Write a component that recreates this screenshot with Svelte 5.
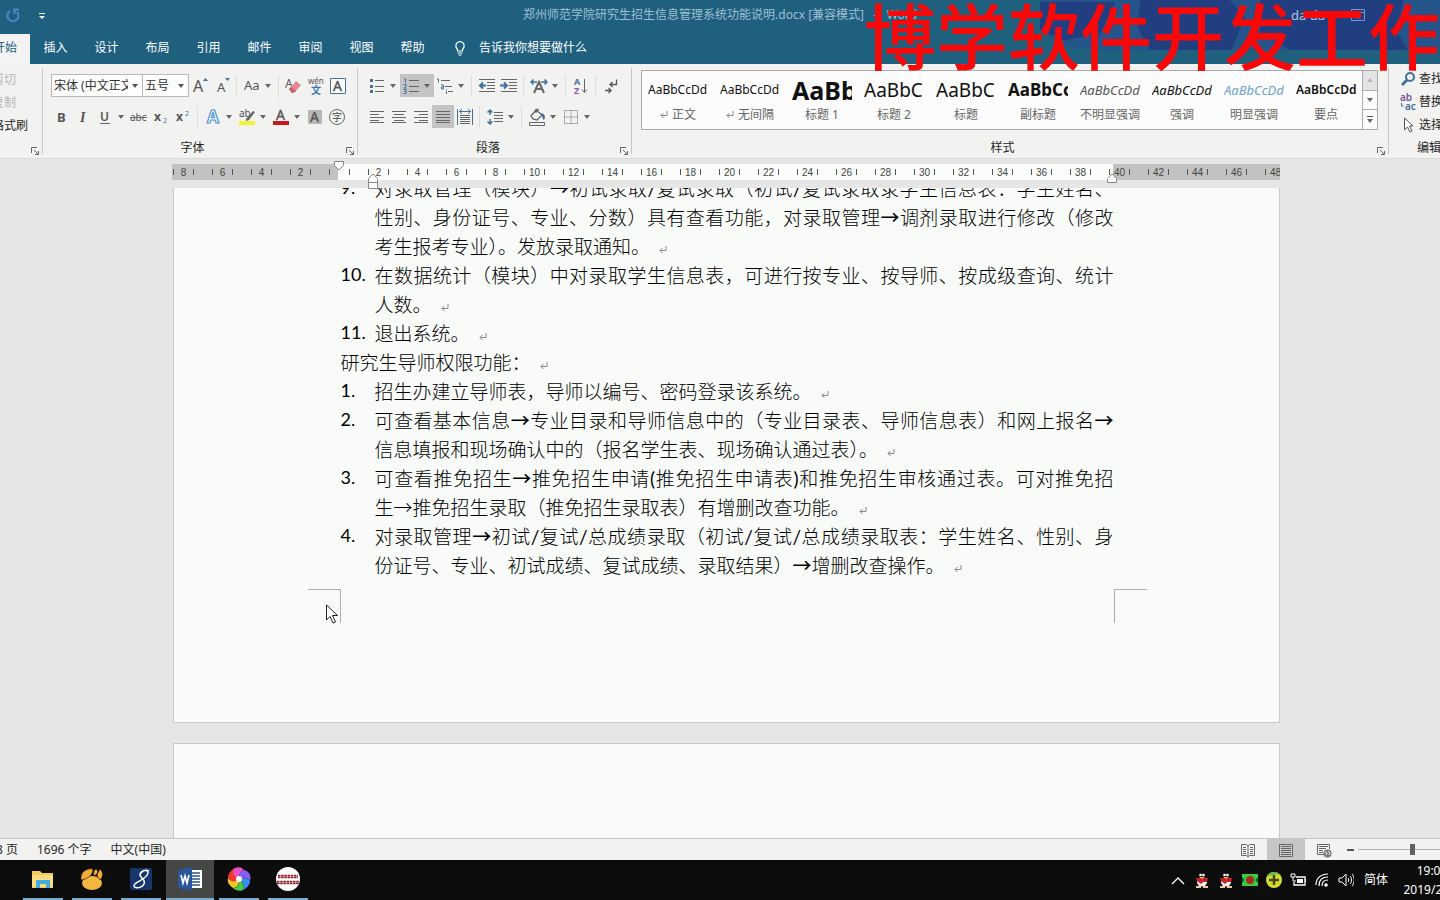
<script lang="ts">
  interface Tool {
    icon: string;
    label: string;
    menu?: boolean;
    active?: boolean;
    divider?: boolean;
  }

  interface Line {
    text: string;
    full?: boolean;
    plain?: boolean;
  }

  interface Paragraph {
    num?: string;
    lines: Line[];
  }

  const tabs = ['插入', '设计', '布局', '引用', '邮件', '审阅', '视图', '帮助'];

  const fontTop: Tool[] = [
    { icon: 'grow', label: '增大字号' },
    { icon: 'shrink', label: '减小字号' },
    { icon: 'case', label: '更改大小写', menu: true, divider: true },
    { icon: 'eraser', label: '清除所有格式', divider: true },
    { icon: 'pinyin', label: '拼音指南' },
    { icon: 'charBorder', label: '字符边框' },
  ];

  const fontBottom: Tool[] = [
    { icon: 'bold', label: '加粗' },
    { icon: 'italic', label: '倾斜' },
    { icon: 'underline', label: '下划线', menu: true },
    { icon: 'strike', label: '删除线' },
    { icon: 'sub', label: '下标' },
    { icon: 'sup', label: '上标' },
    { icon: 'effect', label: '文本效果', menu: true, divider: true },
    { icon: 'highlight', label: '突出显示', menu: true },
    { icon: 'color', label: '字体颜色', menu: true },
    { icon: 'shade', label: '字符底纹' },
    { icon: 'circled', label: '带圈字符' },
  ];

  const paraTop: Tool[] = [
    { icon: 'bullets', label: '项目符号', menu: true },
    { icon: 'numbers', label: '编号', menu: true, active: true },
    { icon: 'levels', label: '多级列表', menu: true },
    { icon: 'outdent', label: '减少缩进量', divider: true },
    { icon: 'indent', label: '增加缩进量' },
    { icon: 'asian', label: '中文版式', menu: true, divider: true },
    { icon: 'sort', label: '排序', divider: true },
    { icon: 'marks', label: '显示编辑标记', divider: true },
  ];

  const paraBottom: Tool[] = [
    { icon: 'left', label: '左对齐' },
    { icon: 'center', label: '居中' },
    { icon: 'right', label: '右对齐' },
    { icon: 'justify', label: '两端对齐', active: true },
    { icon: 'distribute', label: '分散对齐' },
    { icon: 'spacing', label: '行和段落间距', menu: true, divider: true },
    { icon: 'fill', label: '底纹', menu: true, divider: true },
    { icon: 'borders', label: '边框', menu: true },
  ];

  const styles = [
    { sample: 'AaBbCcDd', name: '正文', kind: 'plain', mark: true },
    { sample: 'AaBbCcDd', name: '无间隔', kind: 'plain', mark: true },
    { sample: 'AaBb', name: '标题 1', kind: 'h1' },
    { sample: 'AaBbC', name: '标题 2', kind: 'h2' },
    { sample: 'AaBbC', name: '标题', kind: 'h2' },
    { sample: 'AaBbCc', name: '副标题', kind: 'subtitle' },
    { sample: 'AaBbCcDd', name: '不明显强调', kind: 'subtle' },
    { sample: 'AaBbCcDd', name: '强调', kind: 'emphasis' },
    { sample: 'AaBbCcDd', name: '明显强调', kind: 'intense' },
    { sample: 'AaBbCcDd', name: '要点', kind: 'strong' },
  ];

  const rulerMarks = Array.from({ length: 29 }, (_, i) => Math.abs(i * 2 - 8));

  const paragraphs: Paragraph[] = [
    {
      num: '9.',
      lines: [
        { text: '对录取管理（模块）→初试录取/复试录取（初试/复试录取录学生信息表：学生姓名、', full: true },
        { text: '性别、身份证号、专业、分数）具有查看功能，对录取管理→调剂录取进行修改（修改', full: true },
        { text: '考生报考专业）。发放录取通知。' },
      ],
    },
    {
      num: '10.',
      lines: [
        { text: '在数据统计（模块）中对录取学生信息表，可进行按专业、按导师、按成级查询、统计', full: true },
        { text: '人数。' },
      ],
    },
    { num: '11.', lines: [{ text: '退出系统。' }] },
    { lines: [{ text: '研究生导师权限功能：' }] },
    { num: '1.', lines: [{ text: '招生办建立导师表，导师以编号、密码登录该系统。' }] },
    {
      num: '2.',
      lines: [
        { text: '可查看基本信息→专业目录和导师信息中的（专业目录表、导师信息表）和网上报名→', full: true },
        { text: '信息填报和现场确认中的（报名学生表、现场确认通过表）。' },
      ],
    },
    {
      num: '3.',
      lines: [
        { text: '可查看推免招生→推免招生申请(推免招生申请表)和推免招生审核通过表。可对推免招', full: true },
        { text: '生→推免招生录取（推免招生录取表）有增删改查功能。', plain: true },
      ],
    },
    {
      num: '4.',
      lines: [
        { text: '对录取管理→初试/复试/总成绩录取（初试/复试/总成绩录取表：学生姓名、性别、身', full: true },
        { text: '份证号、专业、初试成绩、复试成绩、录取结果）→增删改查操作。' },
      ],
    },
  ];

  const apps = [
    { icon: 'folder', label: '文件资源管理器' },
    { icon: 'paw', label: '浏览器' },
    { icon: 'eight', label: '数据库' },
    { icon: 'word', label: 'Word', active: true },
    { icon: 'pinwheel', label: '图片' },
    { icon: 'badge', label: '录屏' },
  ];

  const tray = [
    { icon: 'chevron', label: '显示隐藏的图标' },
    { icon: 'penguin', label: 'QQ' },
    { icon: 'penguin', label: 'QQ' },
    { icon: 'gpu', label: '显卡' },
    { icon: 'plus', label: '安全卫士' },
    { icon: 'battery', label: '电源' },
    { icon: 'wifi', label: '网络' },
    { icon: 'volume', label: '音量' },
  ];

  const g = 'stroke="#666" fill="none"';
  const b = 'stroke="#41719c" fill="none"';
  const t = 'font-family="Noto Sans, sans-serif" fill="#555"';

  // All glyphs are drawn on an 18x18 grid.
  const icons: Record<string, string> = {
    grow: `<text x="2" y="15" font-size="16" ${t}>A</text><path d="M12 4l2.500-3 2.500 3z" fill="#41719c"/>`,
    shrink: `<text x="4" y="15" font-size="13" ${t}>A</text><path d="M12 1l2.500 3 2.500-3z" fill="#41719c"/>`,
    case: `<text x="1" y="13" font-size="13" ${t}>Aa</text>`,
    eraser: `<text x="0" y="11" font-size="12" ${t}>A</text><path d="M4 12l7-8 5 4-6 7-3 1z" fill="#e58792"/><path d="M4 12l2-2 5 4-1 1-3 1z" fill="#c9606f"/>`,
    pinyin: `<text x="1" y="7" font-size="8" ${t}>wén</text><text x="4" y="17" font-size="10" font-weight="700" font-family="Noto Sans CJK SC, sans-serif" fill="#3a78b5">文</text>`,
    charBorder: `<path d="M1.500 1.500h15v15h-15z" stroke="#41719c" fill="#fff"/><text x="4" y="14" font-size="14" ${t} stroke="#555" stroke-width=".4">A</text>`,
    bold: `<text x="5" y="14" font-size="13" font-weight="700" ${t}>B</text>`,
    italic: `<text x="6" y="14" font-size="14" font-style="italic" font-weight="700" font-family="Liberation Serif, serif" fill="#555">I</text>`,
    underline: `<text x="4" y="13" font-size="12" font-weight="600" ${t}>U</text><path d="M4 15.500h10" ${g}/>`,
    strike: `<text x="0" y="13" font-size="10" ${t}>abc</text><path d="M0 9.500h17" ${g}/>`,
    sub: `<text x="2" y="13" font-size="12" font-weight="700" ${t}>x</text><text x="11" y="15" font-size="7" font-family="Noto Sans" fill="#3a78b5">2</text>`,
    sup: `<text x="2" y="13" font-size="12" font-weight="700" ${t}>x</text><text x="11" y="8" font-size="7" font-family="Noto Sans" fill="#3a78b5">2</text>`,
    effect: `<text x="3" y="15" font-size="17" font-weight="700" font-family="Noto Sans" fill="#fff" stroke="#4f94cf" stroke-width="1.200">A</text>`,
    highlight: `<path d="M1 13h16v4H1z" fill="#f4f42c"/><text x="1" y="9" font-size="10" ${t}>ab</text><path d="M8 11l7-8 2 1-6 8-3 1z" fill="#666"/>`,
    color: `<path d="M1 13h16v4H1z" fill="#c41a1f"/><text x="4" y="12" font-size="14" ${t} stroke="#555" stroke-width=".4">A</text>`,
    shade: `<path d="M2 2h14v14H2z" fill="#b8b8b8"/><text x="4" y="14" font-size="14" ${t} stroke="#555" stroke-width=".4">A</text>`,
    circled: `<circle cx="9" cy="9" r="7.500" ${g}/><text x="4" y="13" font-size="10" font-family="Noto Sans CJK SC, sans-serif" fill="#444">字</text>`,
    bullets: `<path d="M2 2h3v3H2zM2 8h3v3H2zM2 13h3v3H2z" fill="#41719c"/><path d="M7 3.500h9M7 9.500h9M7 14.500h9" ${g}/>`,
    numbers: `<path d="M7 3.500h10M7 9.500h10M7 14.500h10" ${g}/><path d="M2 2h1.500v3.500M1.500 7.500h2.500v1.500l-2 2h2.500M1.500 12.500h2.500v4H1.500M2.500 14.500H4" ${b}/>`,
    levels: `<path d="M5 3.500h9M9 9.500h7M12 14.500h5" ${g}/><path d="M1 2h1.500v3.500M5 8h2.500v4H5.500v-2h2M10.500 12v1M10.500 14v3" ${b}/>`,
    outdent: `<path d="M1 2.500h16M9 5.500h8M9 8.500h8M9 11.500h8M1 14.500h16" ${g}/><path d="M8 8.500H2M5 5.500l-3 3 3 3" ${b} stroke-width="2"/>`,
    indent: `<path d="M1 2.500h16M9 5.500h8M9 8.500h8M9 11.500h8M1 14.500h16" ${g}/><path d="M0 8.500h6M4 5.500l3 3-3 3" ${b} stroke-width="2"/>`,
    asian: `<path d="M4 16l5-11 5 11M6 12h6" ${g} stroke-width="2"/><path d="M7 5H1M3.500 2.500L1 5l2.500 2.500M11 5h6M14.500 2.500L17 5l-2.500 2.500" ${b} stroke-width="1.500"/>`,
    sort: `<text x="2" y="8" font-size="9" font-weight="700" font-family="Noto Sans" fill="#41719c">A</text><text x="2" y="17" font-size="9" font-weight="700" font-family="Noto Sans" fill="#8a5aa8">Z</text><path d="M12.500 2v13M10 12.500l2.500 3 2.500-3" ${g}/>`,
    marks: `<path d="M14.500 2.500v5H8.500M10.500 5L8 7.500 10.500 10M3 13.500h6M6.500 11L9 13.500 6.500 16" stroke="#555" stroke-width="1.300" fill="none"/>`,
    left: `<path d="M2 3.500h14M2 6.500h9M2 9.500h14M2 12.500h9M2 14.500h14" ${g}/>`,
    center: `<path d="M2 3.500h14M4 6.500h10M2 9.500h14M4 12.500h10M2 14.500h14" ${g}/>`,
    right: `<path d="M2 3.500h14M7 6.500h9M2 9.500h14M7 12.500h9M2 14.500h14" ${g}/>`,
    justify: `<path d="M2 3.500h14M2 6.500h14M2 9.500h14M2 12.500h14M2 14.500h14" ${g}/>`,
    distribute: `<path d="M4 7.500h10M4 9.500h10M4 11.500h10M4 13.500h10M4 15.500h10" ${g}/><path d="M1.500 1v16M16.500 1v16M3 3.500h12M6 1L3.500 3.500 6 6M12 1l2.500 2.500L12 6" ${b}/>`,
    spacing: `<path d="M8 4.500h9M8 7.500h9M8 10.500h9M8 13.500h9" ${g}/><path d="M4 2v5M1.500 4.500L4 2l2.500 2.500M4 11v5M1.500 13.500L4 16l2.500-2.500" ${b} stroke-width="1.500"/>`,
    fill: `<path d="M3 8l5-6 6 5-5 5-4-1zM8 5V1.500h2V4" ${g} stroke-width="1.300"/><path d="M12 5c5 0 6 4 4 7-2-1-1-4-4-7" fill="#41719c"/><path d="M1.500 14.500h15v3h-15z" ${g}/>`,
    borders: `<path d="M2.500 2.500h13v13h-13zM9 2.500v13M2.500 9h13" ${g} stroke-dasharray="1 1"/>`,
    find: `<circle cx="11" cy="7" r="4" stroke="#41719c" stroke-width="2" fill="none"/><path d="M8 10l-5 5" stroke="#41719c" stroke-width="3"/>`,
    replace: `<text x="1" y="8" font-size="10" font-weight="600" font-family="Noto Sans" fill="#76559b">ab</text><text x="6" y="17" font-size="10" font-weight="600" font-family="Noto Sans" fill="#456f94">ac</text><path d="M2.500 10v3h2" ${b}/>`,
    select: `<path d="M5.500 2v12l3-3 2.500 5 2-1-2.500-5h3.500z" stroke="#555" fill="#fff"/>`,
    read: `<path d="M2.500 3.500h5L9 5l1.500-1.500h5v11h-5L9 16l-1.500-1.500h-5zM9 5v11M4 6.500h3M4 8.500h3M4 10.500h3M4 12.500h3M11 6.500h3M11 8.500h3M11 10.500h3M11 12.500h3" ${g}/>`,
    print: `<path d="M2.500 3.500h13v12h-13zM4 5.500h10M4 7.500h10M4 9.500h10M4 11.500h10M4 13.500h10" ${g}/>`,
    web: `<path d="M9 13.500H2.500v-10h12V8M4 5.500h9M4 7.500h7M4 9.500h4M4 11.500h4" ${g}/><circle cx="12.500" cy="12.500" r="4" fill="#777"/><path d="M10 11l2 1-1 2M13 10l2 2-1 2" stroke="#f1f1f1" fill="none"/>`,
    bulb: `<path d="M6.500 12V10.500C4 8.500 4 3 9 2.500c5 .5 5 6 2.500 8V12zM6.500 14h5M7.500 16h3" stroke="#fff" stroke-width="1.200" fill="none"/>`,
  };

  const appIcons: Record<string, string> = {
    folder: `<path d="M1 4h8l2 2h11v15H1z" fill="#f3c95b"/><path d="M1 8h21v12H1z" fill="#fbdc82"/><path d="M5 21v-8h14v8h-4v-4H9v4z" fill="#45aee0"/>`,
    paw: `<ellipse cx="12" cy="16" rx="10" ry="7" fill="#f6b740"/><path d="M1 13C0 5 6 1 13 2c0 6-5 10-12 11M14 9c-1-4 0-6 2-7 3 2 2 5-2 7M17 9c0-3 2-5 3-7 4 4 3 8 0 11z" fill="#f2ad36" stroke="#0b0c0b" stroke-width=".6"/>`,
    eight: `<rect x="1" y="1" width="22" height="22" rx="2" fill="#17366d"/><path d="M20 4c-3-2-9 0-9 4 0 3 6 4 4 9-2 4-9 5-10 2-1-4 13-6 14-13 0-4-5-3-7 0" stroke="#fff" stroke-width="1.500" fill="none"/>`,
    word: `<path d="M13 3h11v18H13z" fill="#fff"/><path d="M14 6h8M14 9h8M14 12h8M14 15h8M14 18h8" stroke="#2b579a" stroke-width="1.500"/><path d="M0 3l14-3v24L0 21z" fill="#2b579a"/><path d="M3 8l2 8 2-7 2 7 2-8" stroke="#fff" stroke-width="1.700" fill="none"/>`,
    pinwheel: `<path d="M12 12C6 10 4 5 6 2c5-3 9-2 11 1-4 1-5 5-5 9z" fill="#e94fc4"/><path d="M12 12c0-6 2-9 6-9 6 3 6 7 5 11-3-4-7-4-11-2z" fill="#8a5cf0"/><path d="M12 12c5-2 9-1 11 2 0 4-3 7-7 9 2-5 0-8-4-11z" fill="#3b8cf0"/><path d="M12 12c4 3 6 7 4 11-4 2-8 0-10-2 5 0 7-4 6-9z" fill="#44c94b"/><path d="M12 12c1 5-2 9-6 9-4-3-6-6-5-10 3 4 7 4 11 1z" fill="#f5c52a"/><path d="M12 12c-4 3-9 3-11-1 0-4 3-8 6-9-2 5 0 8 5 10z" fill="#f0382f"/><circle cx="12" cy="12" r="3" fill="#fff"/>`,
    badge: `<circle cx="12" cy="12" r="12" fill="#fff"/><path d="M2 9.500h20M1 15.500h22" stroke="#8c1f28" stroke-width="3.500" stroke-dasharray="2.500 .7"/><path d="M2 9.500h20M1 15.500h22" stroke="#d9a9ac" stroke-width=".6"/>`,
    chevron: `<path d="M2 12l6-6 6 6" stroke="#fff" stroke-width="1.400" fill="none"/>`,
    penguin: `<circle cx="8" cy="4" r="3" fill="#222"/><circle cx="6.500" cy="3" r="1.300" fill="#fff"/><circle cx="9.500" cy="3" r="1.300" fill="#fff"/><ellipse cx="8" cy="10" rx="5" ry="4.500" fill="#f3ece8"/><path d="M2 6h12l-1 4H9L7 12 3 9z" fill="#c3202f"/><path d="M5 5h6l-3 2z" fill="#f1a22c"/><path d="M2 15h5M9 15h5" stroke="#f0c8a0" stroke-width="2"/>`,
    gpu: `<path d="M0 2h16v12H0z" fill="#31cf3c"/><path d="M0 5l3 3-3 3M16 5l-3 3 3 3" fill="#1a6a25"/><circle cx="8" cy="8" r="4" fill="#b02423"/>`,
    plus: `<circle cx="8" cy="8" r="8" fill="#d6d92d"/><path d="M1 4C5-2 12 0 14 3 9 1 6 4 1 4" fill="#62b84b"/><path d="M8 3v10M3 8h10" stroke="#3b4a10" stroke-width="2.500"/>`,
    battery: `<path d="M6 5h9v8H4v-3" stroke="#fff" stroke-width="1.300" fill="none"/><path d="M7 7h6v4H7zM15 7h1v3h-1z" fill="#fff"/><path d="M1 2v3h4V2M3 5v4h3M2 1v2M4 1v2" stroke="#fff" fill="none"/>`,
    wifi: `<path d="M2 13C2 6 7 2 14 2M5 14c0-6 3-9 9-9M8 14c0-4 2-6 6-6" stroke="#fff" stroke-width="1.200" fill="none"/><circle cx="12" cy="13" r="1.800" fill="#fff"/>`,
    volume: `<path d="M1 6h3l4-4v12l-4-4H1zM10 6c1 1 1 3 0 4M12 4c2 2 2 6 0 8M14 2c3 3 3 9 0 12" stroke="#fff" fill="none"/>`,
  };

  let fontName = $state('宋体 (中文正文)');
  let fontSize = $state('五号');
  let zoom = $state(54);
</script>

{#snippet glyph(name: string)}
  <svg class="glyph" viewBox="0 0 18 18" aria-hidden="true">{@html icons[name]}</svg>
{/snippet}

{#snippet tools(items: Tool[])}
  {#each items as item (item.icon)}
    {#if item.divider}<span class="divider"></span>{/if}
    <button class="tool" class:active={item.active} class:has-menu={item.menu} aria-label={item.label}>
      {@render glyph(item.icon)}
      {#if item.menu}<span class="arrow"></span>{/if}
    </button>
  {/each}
{/snippet}

{#snippet launcher()}
  <button class="launcher" aria-label="更多设置">
    <svg viewBox="0 0 8 8"><path d="M.5 6V.5H6M3 3l4 4M7.500 4v3.500H4" stroke="#666" fill="none" /></svg>
  </button>
{/snippet}

{#snippet returnMark()}
  <svg class="return" viewBox="0 0 8 8" aria-hidden="true">
    <path d="M7 0v4.500H1M3.500 2L1 4.500 3.500 7" stroke="#888" fill="none" />
  </svg>
{/snippet}

<div class="app">
  <header class="titlebar">
    <svg class="haze" viewBox="0 0 400 50" preserveAspectRatio="none" aria-hidden="true">
      <path d="M0 0h400v50H60L24 46 0 30z" fill="#25548a" />
      <path d="M0 2h75L60 34 24 40 0 30zM100 0h90l15 18-14 32H110L98 28zM220 0h144l-8 30 12 20-118 0-30-18z" fill="#213f80" />
    </svg>
    <div class="quick">
      <button aria-label="重复">
        <svg viewBox="0 0 14 16"><path d="M4 4a5.500 5.500 0 1 0 7 1M13 2.500H8.500V7" stroke="#5684cc" stroke-width="2" fill="none" /></svg>
      </button>
      <button aria-label="自定义快速访问工具栏">
        <svg viewBox="0 0 14 16"><path d="M5 6.500h6" stroke="#fff" /><path d="M5 9h6l-3 3z" fill="#fff" /></svg>
      </button>
    </div>
    <h1>郑州师范学院研究生招生信息管理系统功能说明.docx [兼容模式] &nbsp;&nbsp;- &nbsp;&nbsp;Word</h1>
    <div class="account">
      <span>da da</span>
      <button aria-label="功能区显示选项">
        <svg viewBox="0 0 14 12"><path d="M.5.500h13v11H.5zM.5 3.500h13M7 10V5M5 7l2-2 2 2" stroke="#7398c8" fill="none" /></svg>
      </button>
    </div>
  </header>

  <nav class="tabs">
    <button class="tab current"><span>开始</span></button>
    {#each tabs as tab (tab)}
      <button class="tab">{tab}</button>
    {/each}
    <button class="tell">{@render glyph('bulb')}告诉我你想要做什么</button>
  </nav>

  <section class="ribbon">
    <div class="group clipboard">
      <div class="stack">
        <button disabled>剪切</button>
        <button disabled>复制</button>
        <button>格式刷</button>
      </div>
      {@render launcher()}
    </div>

    <div class="group font">
      <div class="row">
        <select class="font-name" aria-label="字体" bind:value={fontName}>
          <option>宋体 (中文正文)</option>
        </select>
        <select class="font-size" aria-label="字号" bind:value={fontSize}>
          <option>五号</option>
        </select>
        {@render tools(fontTop)}
      </div>
      <div class="row">{@render tools(fontBottom)}</div>
      <div class="caption">字体</div>
      {@render launcher()}
    </div>

    <div class="group paragraph">
      <div class="row">{@render tools(paraTop)}</div>
      <div class="row">{@render tools(paraBottom)}</div>
      <div class="caption">段落</div>
      {@render launcher()}
    </div>

    <div class="group styles">
      <div class="gallery">
        {#each styles as style (style.name)}
          <button class="style">
            <span class="sample {style.kind}">{style.sample}</span>
            <span class="name">{#if style.mark}{@render returnMark()}{/if}{style.name}</span>
          </button>
        {/each}
        <div class="scroller">
          <button disabled aria-label="上一行"><span class="arrow up"></span></button>
          <button aria-label="下一行"><span class="arrow"></span></button>
          <button aria-label="其他"><span class="bar"></span><span class="arrow"></span></button>
        </div>
      </div>
      <div class="caption">样式</div>
      {@render launcher()}
    </div>

    <div class="group editing">
      <div class="stack">
        <button>{@render glyph('find')}查找</button>
        <button>{@render glyph('replace')}替换</button>
        <button>{@render glyph('select')}选择</button>
      </div>
      <div class="caption">编辑</div>
    </div>
  </section>

  <div class="workspace">
    <div class="ruler">
      <div class="scale">
        {#each rulerMarks as mark}
          <span class="cell"><i></i>{mark || ''}<i></i></span>
        {/each}
      </div>
      <svg class="marker first" viewBox="0 0 12 10"><path d="M1.500.500h9v4L6 9 1.500 4.500z" /></svg>
      <svg class="marker hanging" viewBox="0 0 12 16"><path d="M6 1l4.500 4.500v4h-9v-4zM1.500 9.500h9v6h-9z" /></svg>
      <svg class="marker end" viewBox="0 0 12 10"><path d="M6 1l4.500 4.500v4h-9v-4z" /></svg>
    </div>

    <main class="canvas">
      <article class="page">
        <div class="text">
          {#each paragraphs as para}
            <div class="para">
              {#if para.num}<span class="num">{para.num}</span>{/if}
              <p>
                {#each para.lines as line, i}
                  <span class="line" class:full={line.full}>
                    {#each line.text.split(/([→/()])/) as part}{#if part === '→' && !line.plain}<span class="to">→</span>{:else if /[/()]/.test(part)}<span class="latin">{part}</span>{:else}{part}{/if}{/each}{#if i === para.lines.length - 1}{@render returnMark()}{/if}
                  </span>
                {/each}
              </p>
            </div>
          {/each}
        </div>
        <div class="corners"><span></span><span></span></div>
      </article>
      <article class="page next"></article>
      <svg class="cursor" viewBox="0 0 14 20">
        <path d="M1.500 1v15l3.500-3.500 3 6.500 2.500-1-3-6.500h5z" fill="#fff" stroke="#222" />
      </svg>
    </main>
  </div>

  <footer class="status">
    <div class="counts">
      <span class="page-no">8 页</span>
      <span>1696 个字</span>
      <span>中文(中国)</span>
    </div>
    <div class="views">
      <button aria-label="阅读视图">{@render glyph('read')}</button>
      <button class="active" aria-label="页面视图">{@render glyph('print')}</button>
      <button aria-label="Web 版式视图">{@render glyph('web')}</button>
      <button class="minus" aria-label="缩小"><span></span></button>
      <input type="range" min="0" max="100" aria-label="显示比例" bind:value={zoom} />
    </div>
  </footer>

  <div class="taskbar">
    <div class="apps">
      {#each apps as app (app.icon)}
        <button class:active={app.active} aria-label={app.label}>
          <svg viewBox="0 0 24 24">{@html appIcons[app.icon]}</svg>
        </button>
      {/each}
    </div>
    <div class="tray">
      {#each tray as item}
        <button aria-label={item.label}><svg viewBox="0 0 16 16">{@html appIcons[item.icon]}</svg></button>
      {/each}
      <span class="ime">简体</span>
      <div class="clock"><span>19:06</span><span>2019/2/26</span></div>
    </div>
  </div>

  <div class="watermark">博学软件开发工作</div>
</div>

<style>
  :global(body) {
    margin: 0;
  }

  .app {
    position: relative;
    display: flex;
    flex-direction: column;
    height: 100vh;
    overflow: hidden;
    background: #e6e6e6;
    color: #262626;
    font: 12px/16px 'Noto Sans', 'Noto Sans CJK SC', sans-serif;
  }

  button {
    display: flex;
    align-items: center;
    padding: 0;
    border: 0;
    background: none;
    color: inherit;
    font: inherit;
    white-space: nowrap;
  }

  .titlebar {
    position: relative;
    display: flex;
    align-items: center;
    justify-content: space-between;
    flex: none;
    height: 34px;
    padding-bottom: 4px;
    box-sizing: border-box;
    background: #20607f;
  }

  .haze {
    position: absolute;
    top: 0;
    right: 0;
    width: 400px;
    height: 50px;
    z-index: 1;
  }

  .quick {
    display: flex;
    gap: 14px;
    padding-left: 6px;
  }

  .quick svg {
    width: 14px;
    height: 16px;
  }

  .titlebar h1 {
    position: absolute;
    left: 0;
    right: 0;
    z-index: 1;
    margin: 0;
    color: #9fbfd2;
    font-size: 12px;
    font-weight: 400;
    line-height: 16px;
    text-align: center;
    pointer-events: none;
  }

  .account {
    display: flex;
    align-items: center;
    gap: 26px;
    z-index: 2;
    padding-right: 75px;
    color: #b6c6e2;
    font-size: 13px;
  }

  .account svg {
    width: 14px;
    height: 12px;
  }

  .tabs {
    display: flex;
    flex: none;
    height: 30px;
    background: #20607f;
    color: #fff;
  }

  .tab {
    justify-content: center;
    width: 51px;
    padding-bottom: 2px;
  }

  .tab.current {
    justify-content: flex-end;
    width: 30px;
    padding-right: 13px;
    overflow: hidden;
    box-sizing: border-box;
    background: #f2f3f2;
    color: #20607f;
  }

  .tell {
    gap: 10px;
    padding: 0 0 2px 13px;
  }

  .glyph {
    flex: none;
    width: 18px;
    height: 18px;
  }

  .ribbon {
    display: flex;
    flex: none;
    height: 95px;
    box-sizing: border-box;
    border-bottom: 1px solid #dadada;
    background: #f2f2f1;
  }

  .group {
    position: relative;
    display: flex;
    flex-direction: column;
    flex: none;
    padding: 6px 7px 0;
  }

  .group:not(:last-child)::after {
    content: '';
    position: absolute;
    top: 4px;
    right: 0;
    bottom: 4px;
    width: 1px;
    background: #c8c8c8;
  }

  .clipboard {
    align-items: flex-end;
    width: 43px;
    padding: 4px 15px 0 0;
    box-sizing: border-box;
    overflow: hidden;
  }

  .font {
    padding-right: 9px;
  }

  .stack {
    display: flex;
    flex-direction: column;
  }

  .stack button {
    height: 23px;
  }

  .stack button:disabled {
    color: #b4b4b4;
  }

  .row {
    display: flex;
    align-items: center;
    height: 31px;
  }

  .caption {
    margin: auto 14px 2px 0;
    text-align: center;
    white-space: nowrap;
  }

  select {
    height: 23px;
    padding: 0 14px 0 2px;
    border: 1px solid #b9b9b9;
    border-radius: 0;
    appearance: none;
    background: #fcfdfc url("data:image/svg+xml,%3Csvg xmlns='http://www.w3.org/2000/svg' viewBox='0 0 6 4'%3E%3Cpath d='M0 0h6L3 4z' fill='%23555'/%3E%3C/svg%3E") no-repeat right 4px center / 6px 4px;
    color: #333;
    font: inherit;
  }

  .font-name {
    width: 92px;
    margin-left: 1px;
  }

  .font-size {
    width: 47px;
    margin-left: -1px;
  }

  .tool {
    justify-content: center;
    width: 22px;
    height: 23px;
  }

  .tool.has-menu {
    width: 34px;
    justify-content: flex-start;
    gap: 4px;
    padding-left: 2px;
    box-sizing: border-box;
  }

  .tool.active {
    background: #c3c3c3;
  }

  .arrow {
    border: 3px solid transparent;
    border-top: 4px solid #666;
    border-bottom: 0;
  }

  .arrow.up {
    border-top: 0;
    border-bottom: 4px solid #b8b8b8;
  }

  .divider {
    width: 1px;
    height: 22px;
    margin: 0 4px 0 3px;
    background: #dedede;
  }

  .launcher {
    position: absolute;
    right: 4px;
    bottom: 3px;
  }

  .launcher svg {
    width: 8px;
    height: 8px;
  }

  .paragraph {
    width: 274px;
    padding: 6px 8px 0;
    box-sizing: border-box;
  }

  .styles {
    flex: 1;
    min-width: 0;
    padding: 6px 11px 0 9px;
  }

  .gallery {
    display: flex;
    height: 60px;
    box-sizing: border-box;
    border: 1px solid #a9abb0;
    background: #fbfcfb;
    overflow: hidden;
  }

  .style {
    flex: 1 0 72px;
    flex-direction: column;
    gap: 2px;
    padding-top: 4px;
    box-sizing: border-box;
  }

  .sample {
    display: flex;
    align-items: center;
    width: 60px;
    height: 30px;
    overflow: hidden;
    color: #111;
  }

  .h1 {
    font-size: 25px;
    font-weight: 700;
  }

  .h2 {
    font-size: 19px;
  }

  .subtitle {
    font-size: 17px;
    font-weight: 700;
  }

  .subtle,
  .emphasis,
  .intense {
    font-size: 13px;
    font-style: italic;
  }

  .subtle {
    color: #555;
  }

  .intense {
    color: #6ca3cc;
  }

  .strong {
    font-weight: 600;
  }

  .name {
    color: #666;
  }

  .return {
    width: 8px;
    height: 8px;
  }

  .name .return {
    margin-right: 4px;
  }

  .scroller {
    display: flex;
    flex-direction: column;
    flex: none;
    width: 15px;
    border-left: 1px solid #a9abb0;
    box-sizing: border-box;
  }

  .scroller button {
    flex: 1;
    flex-direction: column;
    justify-content: center;
    gap: 2px;
  }

  .scroller button + button {
    border-top: 1px solid #a9abb0;
  }

  .scroller button:disabled {
    background: #e4e4e4;
  }

  .bar {
    width: 6px;
    height: 1px;
    background: #555;
  }

  .editing {
    width: 51px;
    padding: 3px 0 0 10px;
    box-sizing: border-box;
  }

  .editing .stack button {
    gap: 2px;
  }

  .editing .caption {
    margin-left: 18px;
    margin-right: 0;
    text-align: left;
  }

  .workspace {
    display: flex;
    flex-direction: column;
    flex: 1;
    min-height: 0;
    padding-left: 12px;
  }

  .ruler {
    position: relative;
    flex: none;
    width: 1108px;
    max-width: 100%;
    height: 24px;
    margin: 0 auto;
    padding-top: 5px;
  }

  .scale {
    display: flex;
    height: 16px;
    overflow: hidden;
    background: linear-gradient(to right, #c1c2c1 166px, #fbfdfb 166px 941px, #c1c2c1 941px);
    color: #444;
    font: 10px/17px 'Liberation Sans', sans-serif;
  }

  .cell {
    display: flex;
    align-items: center;
    justify-content: space-between;
    flex: none;
    width: 39px;
    padding: 0 9px;
    box-sizing: border-box;
  }

  .cell:first-child {
    margin-left: -8px;
  }

  .cell i {
    width: 1px;
    height: 6px;
    background: #555;
  }

  .marker {
    position: absolute;
    width: 12px;
    fill: #fff;
    stroke: #888;
  }

  .first {
    top: 2px;
    left: 161px;
  }

  .hanging {
    top: 14px;
    left: 195px;
    z-index: 1;
  }

  .end {
    top: 14px;
    left: 934px;
  }

  .canvas {
    position: relative;
    display: flex;
    flex-direction: column;
    align-items: center;
    gap: 20px;
    flex: 1;
    overflow: hidden;
  }

  .page {
    flex: none;
    width: 1107px;
    max-width: 100%;
    height: 535px;
    padding: 0 165px 0 167px;
    box-sizing: border-box;
    border: 1px solid #c9c9c9;
    border-top: 0;
    background: #f9fbf9;
  }

  .page.next {
    border-top: 1px solid #c9c9c9;
  }

  .text {
    margin-top: -15px;
    color: #000;
    font: 300 19px/29px 'Noto Sans CJK SC', sans-serif;
  }

  .para {
    display: flex;
  }

  .num {
    flex: none;
    width: 34px;
    font-family: Lato, sans-serif;
    font-size: 18px;
    font-weight: 400;
  }

  .para p {
    flex: 1;
    margin: 0;
  }

  .line {
    display: block;
    height: 29px;
    white-space: nowrap;
  }

  .line.full {
    text-align: justify;
    text-align-last: justify;
  }

  .to {
    font-weight: 500;
    line-height: 1;
  }

  .latin {
    font-family: Lato, sans-serif;
    font-weight: 400;
    line-height: 1;
  }

  .line .return {
    margin-left: 9px;
  }

  .corners {
    display: flex;
    justify-content: space-between;
    margin: 10px -33px 0;
  }

  .corners span {
    width: 32px;
    height: 33px;
    border: 1px solid #aeb0ae;
    border-width: 1px 1px 0 0;
  }

  .corners span:last-child {
    border-width: 1px 0 0 1px;
  }

  .cursor {
    position: absolute;
    top: 416px;
    left: 313px;
    width: 14px;
    height: 20px;
  }

  .status {
    display: flex;
    justify-content: space-between;
    flex: none;
    height: 22px;
    box-sizing: border-box;
    border-top: 1px solid #c6c6c6;
    background: #f2f2f1;
  }

  .counts {
    display: flex;
    align-items: center;
    gap: 19px;
  }

  .page-no {
    display: flex;
    justify-content: flex-end;
    width: 18px;
    white-space: nowrap;
  }

  .views {
    display: flex;
    margin-right: -20px;
  }

  .views button {
    justify-content: center;
    width: 38px;
  }

  .views button.active {
    background: #c6c6c6;
  }

  .views button.minus {
    width: 15px;
  }

  .minus span {
    width: 7px;
    height: 2px;
    background: #555;
  }

  input[type='range'] {
    width: 102px;
    height: 21px;
    margin: 0;
    appearance: none;
    background: linear-gradient(#b5b5b5, #b5b5b5) center / 100% 1px no-repeat;
  }

  input[type='range']::-webkit-slider-thumb {
    appearance: none;
    width: 5px;
    height: 11px;
    background: #606060;
  }

  .taskbar {
    display: flex;
    justify-content: space-between;
    flex: none;
    height: 40px;
    background: #0b0c0b;
    color: #fff;
  }

  .apps {
    display: flex;
    gap: 9px;
    padding-left: 23px;
  }

  .apps button {
    justify-content: center;
    width: 40px;
    box-sizing: border-box;
    border-bottom: 2px solid #76add4;
  }

  .apps .active {
    width: 48px;
    margin: 0 -4px;
    background: #454745;
  }

  .apps svg {
    width: 24px;
    height: 24px;
  }

  .tray {
    display: flex;
    align-items: center;
    gap: 8px;
    margin-right: -26px;
  }

  .tray svg {
    width: 16px;
    height: 16px;
  }

  .ime {
    margin: 0 2px 0 2px;
  }

  .clock {
    display: flex;
    flex-direction: column;
    align-items: center;
    gap: 3px;
    width: 68px;
  }

  .watermark {
    position: absolute;
    top: 0;
    right: 0;
    z-index: 3;
    color: #f80808;
    font: 500 72px/66px 'Noto Sans CJK SC', sans-serif;
    white-space: nowrap;
    pointer-events: none;
  }
</style>
